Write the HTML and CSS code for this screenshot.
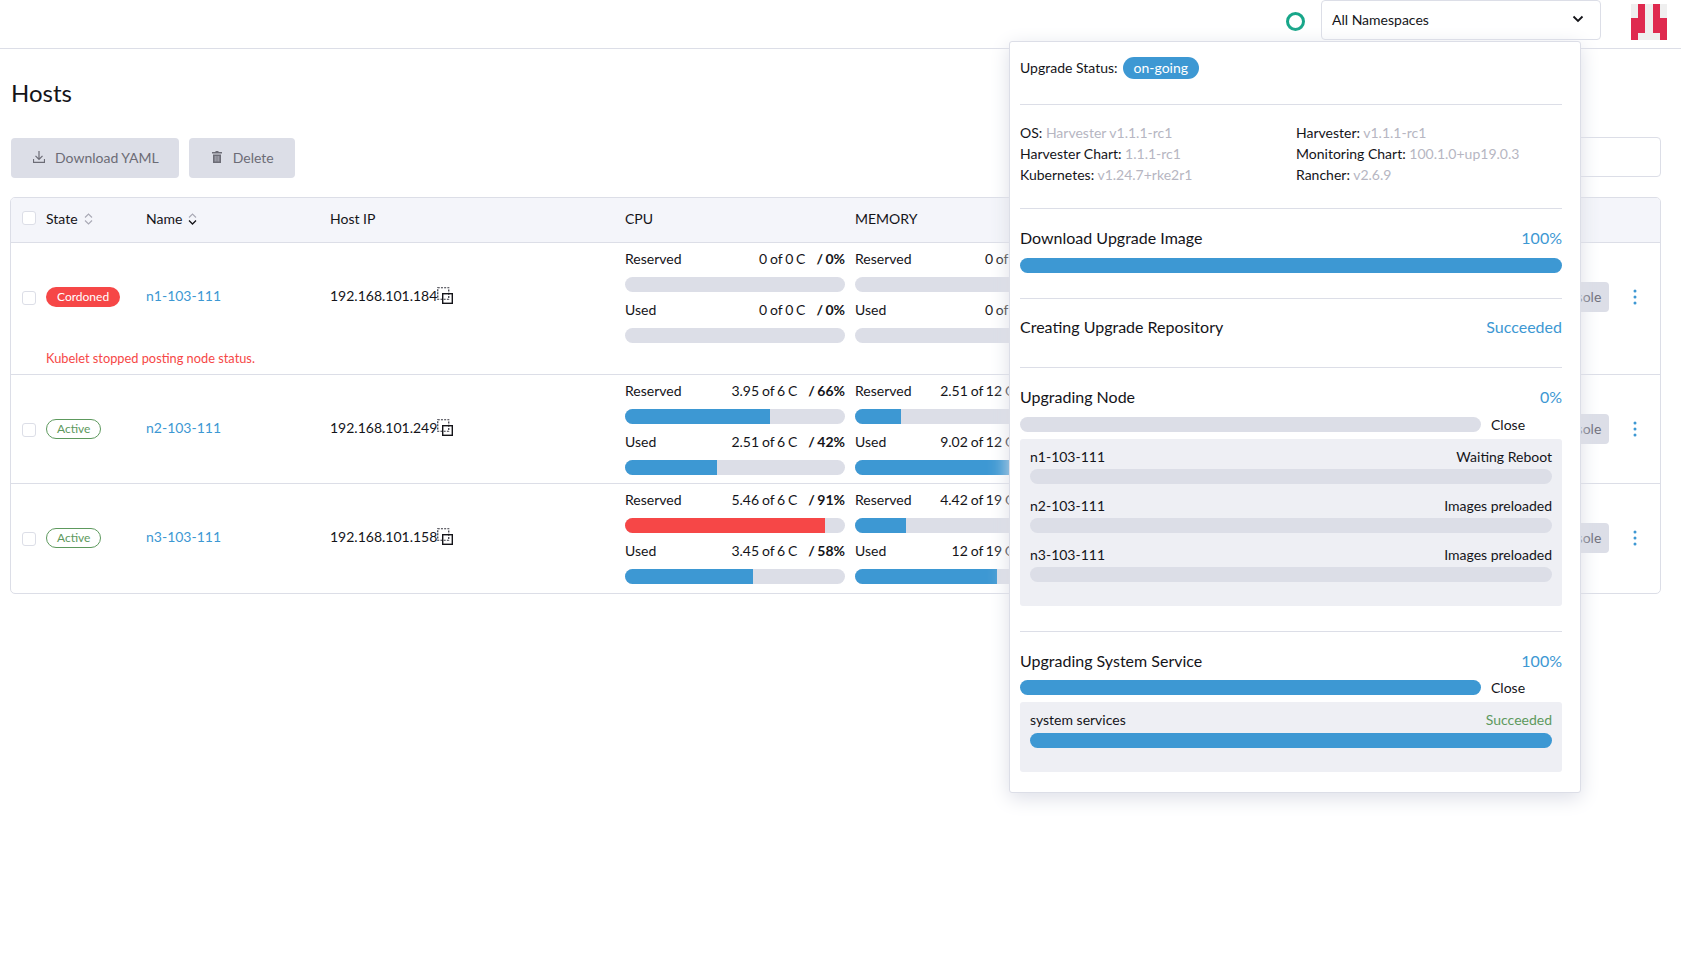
FILE: index.html
```html
<!DOCTYPE html>
<html lang="en">
<head>
<meta charset="utf-8">
<title>Hosts</title>
<link rel="stylesheet" href="styles.css">
</head>
<body>
<header class="topbar">
  <span class="spinner"></span>
  <div class="ns-select">
    <span>All Namespaces</span>
    <svg class="chev" viewBox="0 0 12 8" width="12" height="8"><path d="M1.5 1.5 6 6l4.5-4.5" fill="none" stroke="#141419" stroke-width="1.8"/></svg>
  </div>
  <svg class="logo" viewBox="0 0 36 36" width="36" height="36">
    <rect width="36" height="36" fill="#efefef"/>
    <path d="M14 0v29H7v7H0V14h7V0z" fill="#df2a4f"/>
    <path d="M22 0v29h7v7h7V14h-7V0z" fill="#df2a4f"/>
  </svg>
</header>

<main class="page">
  <h1 class="title">Hosts</h1>
  <div class="toolbar">
    <div class="btn-group">
      <button class="btn">
        <svg class="btn-ico" viewBox="0 0 12 12" width="12" height="12"><path d="M6 0v8M2.5 4.8 6 8.3l3.5-3.5M.5 8v3.3h11V8" fill="none" stroke="#6c6c76" stroke-width="1.2"/></svg>
        Download YAML
      </button>
      <button class="btn">
        <svg class="btn-ico" viewBox="0 0 12 12" width="12" height="12"><path d="M4.5 0h3v1H11v1.5H1V1h3.5zM2 3.5h8V12H2z" fill="#6c6c76"/><path d="M4.2 5v5.5M6 5v5.5M7.8 5v5.5" stroke="#dcdee7" stroke-width=".6"/></svg>
        Delete
      </button>
    </div>
    <div class="search"></div>
  </div>

  <section class="table">
    <div class="grid thead">
      <span class="check"></span>
      <span class="th">State
        <svg class="sort" viewBox="0 0 9 12" width="9" height="12"><path d="M1 4.5 4.5 1 8 4.5M1 7.5 4.5 11 8 7.5" fill="none" stroke="#a9a9b5" stroke-width="1.1"/></svg>
      </span>
      <span class="th">Name
        <svg class="sort" viewBox="0 0 9 12" width="9" height="12"><path d="M1 4.5 4.5 1 8 4.5" fill="none" stroke="#a9a9b5" stroke-width="1.1"/><path d="M1 7.5 4.5 11 8 7.5" fill="none" stroke="#141419" stroke-width="1.3"/></svg>
      </span>
      <span>Host IP</span>
      <span>CPU</span>
      <span>MEMORY</span>
    </div>

    <div class="grid row row-flush">
      <span class="check"></span>
      <span class="badge-cell"><span class="badge badge-red">Cordoned</span></span>
      <a class="link">n1-103-111</a>
      <span class="ip">192.168.101.184<svg class="copy" viewBox="0 0 16 17" width="16" height="17"><use href="#copy"/></svg></span>
      <div class="meters">
        <div class="m-head"><span>Reserved</span><span class="m-val">0 of 0 C</span><b class="m-pct">/ 0%</b></div>
        <div class="bar m-bar"></div>
        <div class="m-head"><span>Used</span><span class="m-val">0 of 0 C</span><b class="m-pct">/ 0%</b></div>
        <div class="bar m-bar"></div>
      </div>
      <div class="meters">
        <div class="m-head"><span>Reserved</span><span class="m-val">0 of 0 Gi</span><b class="m-pct">/ 0%</b></div>
        <div class="bar m-bar"></div>
        <div class="m-head"><span>Used</span><span class="m-val">0 of 0 Gi</span><b class="m-pct">/ 0%</b></div>
        <div class="bar m-bar"></div>
      </div>
      <span></span>
      <button class="console">Console</button>
      <svg class="kebab" viewBox="0 0 4 16" width="4" height="16"><use href="#kebab"/></svg>
    </div>
    <div class="row-error">Kubelet stopped posting node status.</div>

    <div class="grid row">
      <span class="check"></span>
      <span class="badge-cell"><span class="badge badge-green">Active</span></span>
      <a class="link">n2-103-111</a>
      <span class="ip">192.168.101.249<svg class="copy" viewBox="0 0 16 17" width="16" height="17"><use href="#copy"/></svg></span>
      <div class="meters">
        <div class="m-head"><span>Reserved</span><span class="m-val">3.95 of 6 C</span><b class="m-pct">/ 66%</b></div>
        <div class="bar m-bar"><i class="fill" style="width:66%"></i></div>
        <div class="m-head"><span>Used</span><span class="m-val">2.51 of 6 C</span><b class="m-pct">/ 42%</b></div>
        <div class="bar m-bar"><i class="fill" style="width:42%"></i></div>
      </div>
      <div class="meters">
        <div class="m-head"><span>Reserved</span><span class="m-val">2.51 of 12 GiB</span><b class="m-pct">/ 21%</b></div>
        <div class="bar m-bar"><i class="fill" style="width:21%"></i></div>
        <div class="m-head"><span>Used</span><span class="m-val">9.02 of 12 GiB</span><b class="m-pct">/ 75%</b></div>
        <div class="bar m-bar"><i class="fill" style="width:75%"></i></div>
      </div>
      <span></span>
      <button class="console">Console</button>
      <svg class="kebab" viewBox="0 0 4 16" width="4" height="16"><use href="#kebab"/></svg>
    </div>

    <div class="grid row row-last">
      <span class="check"></span>
      <span class="badge-cell"><span class="badge badge-green">Active</span></span>
      <a class="link">n3-103-111</a>
      <span class="ip">192.168.101.158<svg class="copy" viewBox="0 0 16 17" width="16" height="17"><use href="#copy"/></svg></span>
      <div class="meters">
        <div class="m-head"><span>Reserved</span><span class="m-val">5.46 of 6 C</span><b class="m-pct">/ 91%</b></div>
        <div class="bar m-bar"><i class="fill fill-red" style="width:91%"></i></div>
        <div class="m-head"><span>Used</span><span class="m-val">3.45 of 6 C</span><b class="m-pct">/ 58%</b></div>
        <div class="bar m-bar"><i class="fill" style="width:58%"></i></div>
      </div>
      <div class="meters">
        <div class="m-head"><span>Reserved</span><span class="m-val">4.42 of 19 GiB</span><b class="m-pct">/ 23%</b></div>
        <div class="bar m-bar"><i class="fill" style="width:23%"></i></div>
        <div class="m-head"><span>Used</span><span class="m-val">12 of 19 GiB</span><b class="m-pct">/ 64%</b></div>
        <div class="bar m-bar"><i class="fill" style="width:64.5%"></i></div>
      </div>
      <span></span>
      <button class="console">Console</button>
      <svg class="kebab" viewBox="0 0 4 16" width="4" height="16"><use href="#kebab"/></svg>
    </div>
  </section>
</main>

<aside class="popup">
  <div class="p-status">
    <span class="p-status-label">Upgrade Status:</span><span class="pill">on-going</span>
  </div>
  <div class="p-info">
    <div><span>OS: </span><span class="muted">Harvester v1.1.1-rc1</span></div>
    <div><span>Harvester: </span><span class="muted">v1.1.1-rc1</span></div>
    <div><span>Harvester Chart: </span><span class="muted">1.1.1-rc1</span></div>
    <div><span>Monitoring Chart: </span><span class="muted">100.1.0+up19.0.3</span></div>
    <div><span>Kubernetes: </span><span class="muted">v1.24.7+rke2r1</span></div>
    <div><span>Rancher: </span><span class="muted">v2.6.9</span></div>
  </div>
  <div class="p-sec">
    <div class="p-title"><span>Download Upgrade Image</span><span class="blue">100%</span></div>
    <div class="bar p-bar"><i class="fill" style="width:100%"></i></div>
  </div>
  <div class="p-sec p-sec-plain">
    <div class="p-title"><span>Creating Upgrade Repository</span><span class="blue">Succeeded</span></div>
  </div>
  <div class="p-sec">
    <div class="p-title"><span>Upgrading Node</span><span class="blue">0%</span></div>
    <div class="p-barrow"><div class="bar"></div><span>Close</span></div>
    <div class="p-box">
      <div class="p-item"><div class="p-line"><span>n1-103-111</span><span>Waiting Reboot</span></div><div class="bar"></div></div>
      <div class="p-item"><div class="p-line"><span>n2-103-111</span><span>Images preloaded</span></div><div class="bar"></div></div>
      <div class="p-item"><div class="p-line"><span>n3-103-111</span><span>Images preloaded</span></div><div class="bar"></div></div>
    </div>
  </div>
  <div class="p-sec p-sec-last">
    <div class="p-title"><span>Upgrading System Service</span><span class="blue">100%</span></div>
    <div class="p-barrow"><div class="bar"><i class="fill" style="width:100%"></i></div><span>Close</span></div>
    <div class="p-box p-box-sys">
      <div class="p-item"><div class="p-line"><span>system services</span><span class="green">Succeeded</span></div><div class="bar"><i class="fill" style="width:100%"></i></div></div>
    </div>
  </div>
</aside>

<svg class="defs" width="0" height="0" aria-hidden="true">
  <symbol id="copy" viewBox="0 0 16 17">
    <rect x=".75" y=".75" width="11" height="11.5" fill="none" stroke="#33333c" stroke-width="1.2" stroke-dasharray="2 1.2"/>
    <rect x="5.7" y="6.7" width="9.6" height="9.6" fill="none" stroke="#141419" stroke-width="1.4"/>
  </symbol>
  <symbol id="kebab" viewBox="0 0 4 16">
    <circle cx="2" cy="2" r="1.5" fill="#3d98d3"/><circle cx="2" cy="8" r="1.5" fill="#3d98d3"/><circle cx="2" cy="14" r="1.5" fill="#3d98d3"/>
  </symbol>
</svg>
</body>
</html>
```

FILE: styles.css
```css
* { box-sizing: border-box; }
html, body { margin: 0; height: 100%; }
body {
  background: #fff;
  color: #141419;
  font: 14px/21px Lato, "Liberation Sans", sans-serif;
  overflow: hidden;
  position: relative;
}
.defs { position: absolute; }

.topbar {
  height: 49px;
  border-bottom: 1px solid #dcdee7;
  display: flex;
  justify-content: flex-end;
  align-items: flex-start;
  padding-right: 14px;
}
.spinner {
  width: 19px;
  height: 19px;
  margin-top: 12px;
  border: 3px solid #17a689;
  border-radius: 50%;
}
.ns-select {
  width: 280px;
  height: 40px;
  margin-left: 16px;
  padding: 0 16px 2px 10px;
  border: 1px solid #dcdee7;
  border-radius: 4px;
  display: flex;
  justify-content: space-between;
  align-items: center;
}
.logo { margin: 4px 0 0 30px; }

.page { padding: 26px 20px 0 10px; }
.title { margin: 0; font-size: 24px; line-height: 36px; font-weight: 400; padding-left: 1px; }
.toolbar {
  margin-top: 27px;
  display: flex;
  justify-content: space-between;
  align-items: flex-start;
  height: 40px;
}
.btn-group { display: flex; gap: 10px; padding-left: 1px; }
.btn {
  height: 40px;
  padding: 0 20px 2px 22px;
  border: 0;
  border-radius: 4px;
  background: #dcdee7;
  color: #6c6c76;
  font: inherit;
  display: flex;
  align-items: center;
  gap: 10px;
}
.btn + .btn { padding-right: 21px; }
.search {
  width: 300px;
  height: 40px;
  margin-top: -1px;
  border: 1px solid #dcdee7;
  border-radius: 4px;
}

.table {
  margin-top: 19px;
  border: 1px solid #dcdee7;
  border-radius: 5px;
  overflow: hidden;
}
.grid {
  display: grid;
  grid-template-columns: 35px 100px 184px 295px 230px 230px 1fr 65px 51px;
  align-items: center;
}
.thead {
  height: 45px;
  padding-bottom: 4px;
  background: #f4f5fa;
  border-bottom: 1px solid #dcdee7;
}
.th { display: flex; align-items: center; gap: 6px; }
.sort { margin-top: 2px; }
.check {
  width: 14px;
  height: 14px;
  margin-left: 11px;
  border: 1px solid #dcdee7;
  border-radius: 3px;
  background: #fff;
}
.thead .check { margin-top: -1px; }
.row { border-bottom: 1px solid #dcdee7; }
.row-flush { border-bottom: 0; }
.row-last { border-bottom: 0; padding-bottom: 1px; }
.row .check { margin-top: 2px; }
.row-error {
  height: 24px;
  padding-left: 35px;
  border-bottom: 1px solid #dcdee7;
  color: #f64747;
  font-size: 12.8px;
  line-height: 14px;
}
.badge-cell { padding-bottom: 2px; }
.badge {
  display: inline-block;
  height: 20px;
  padding: 0 10px;
  border-radius: 10px;
  font-size: 12px;
  line-height: 18px;
  border: 1px solid transparent;
  vertical-align: middle;
}
.badge-red { background: #f64747; color: #fff; }
.badge-green { border-color: #5d995d; color: #5d995d; }
.link { color: #3d98d3; margin-bottom: 3px; }
.ip { display: flex; align-items: center; margin-bottom: 4px; }
.copy { margin-left: 0; }
.meters { padding: 6px 10px 0 0; }
.m-head { display: flex; height: 21px; line-height: 19px; }
.m-val { margin-left: auto; word-spacing: -.8px; }
.m-pct { margin-left: 11px; font-weight: 700; word-spacing: -1px; }
.bar {
  height: 15px;
  border-radius: 8px;
  background: #dcdee7;
  overflow: hidden;
}
.m-bar { margin: 7px 0 8px; }
.fill { display: block; height: 100%; background: #3d98d3; }
.fill-red { background: #f64747; }
.console {
  height: 30px;
  padding: 0 0 2px;
  border: 0;
  border-radius: 4px;
  background: #dcdee7;
  color: #6c6c76;
  font: inherit;
}
.kebab { justify-self: center; }

.popup {
  position: absolute;
  left: 1009px;
  top: 41px;
  width: 572px;
  height: 752px;
  padding: 15px 18px 0 10px;
  background: #fff;
  border: 1px solid #dcdee7;
  border-radius: 3px;
  box-shadow: 0 5px 20px #dcdee7;
}
.p-status {
  display: flex;
  align-items: center;
  gap: 5px;
  padding-bottom: 25px;
  border-bottom: 1px solid #dcdee7;
}
.p-status-label { line-height: 19px; margin-bottom: 2px; }
.pill {
  height: 22px;
  padding: 0 11px;
  border-radius: 11px;
  background: #3d98d3;
  color: #fff;
  line-height: 21px;
}
.p-info {
  display: grid;
  grid-template-columns: 276px 1fr;
  padding: 17px 0 23px;
  border-bottom: 1px solid #dcdee7;
}
.muted { color: #b6b6c2; }
.p-sec { padding: 18px 0 25px; border-bottom: 1px solid #dcdee7; }
.p-sec-plain { padding: 17px 0 27px; }
.p-sec-last { border-bottom: 0; padding-bottom: 0; }
.p-title {
  display: flex;
  justify-content: space-between;
  font-size: 16px;
  line-height: 22px;
  margin-bottom: 9px;
}
.p-sec-plain .p-title { margin-bottom: 2px; }
.p-sec-last .p-title { margin-bottom: 8px; }
.blue { color: #3d98d3; }
.green { color: #5d995d; }
.p-barrow { display: flex; align-items: center; gap: 10px; height: 15px; }
.p-barrow .bar { width: 461px; }
.p-box {
  margin-top: 7px;
  padding: 8px 10px 12px;
  background: #eeeff4;
  border-radius: 3px;
}
.p-box-sys { padding-top: 9px; }
.p-item { margin-bottom: 12px; }
.p-line {
  display: flex;
  justify-content: space-between;
  line-height: 19px;
  margin-bottom: 3px;
}
.p-box-sys .p-line { line-height: 17px; margin-bottom: 5px; }
```
